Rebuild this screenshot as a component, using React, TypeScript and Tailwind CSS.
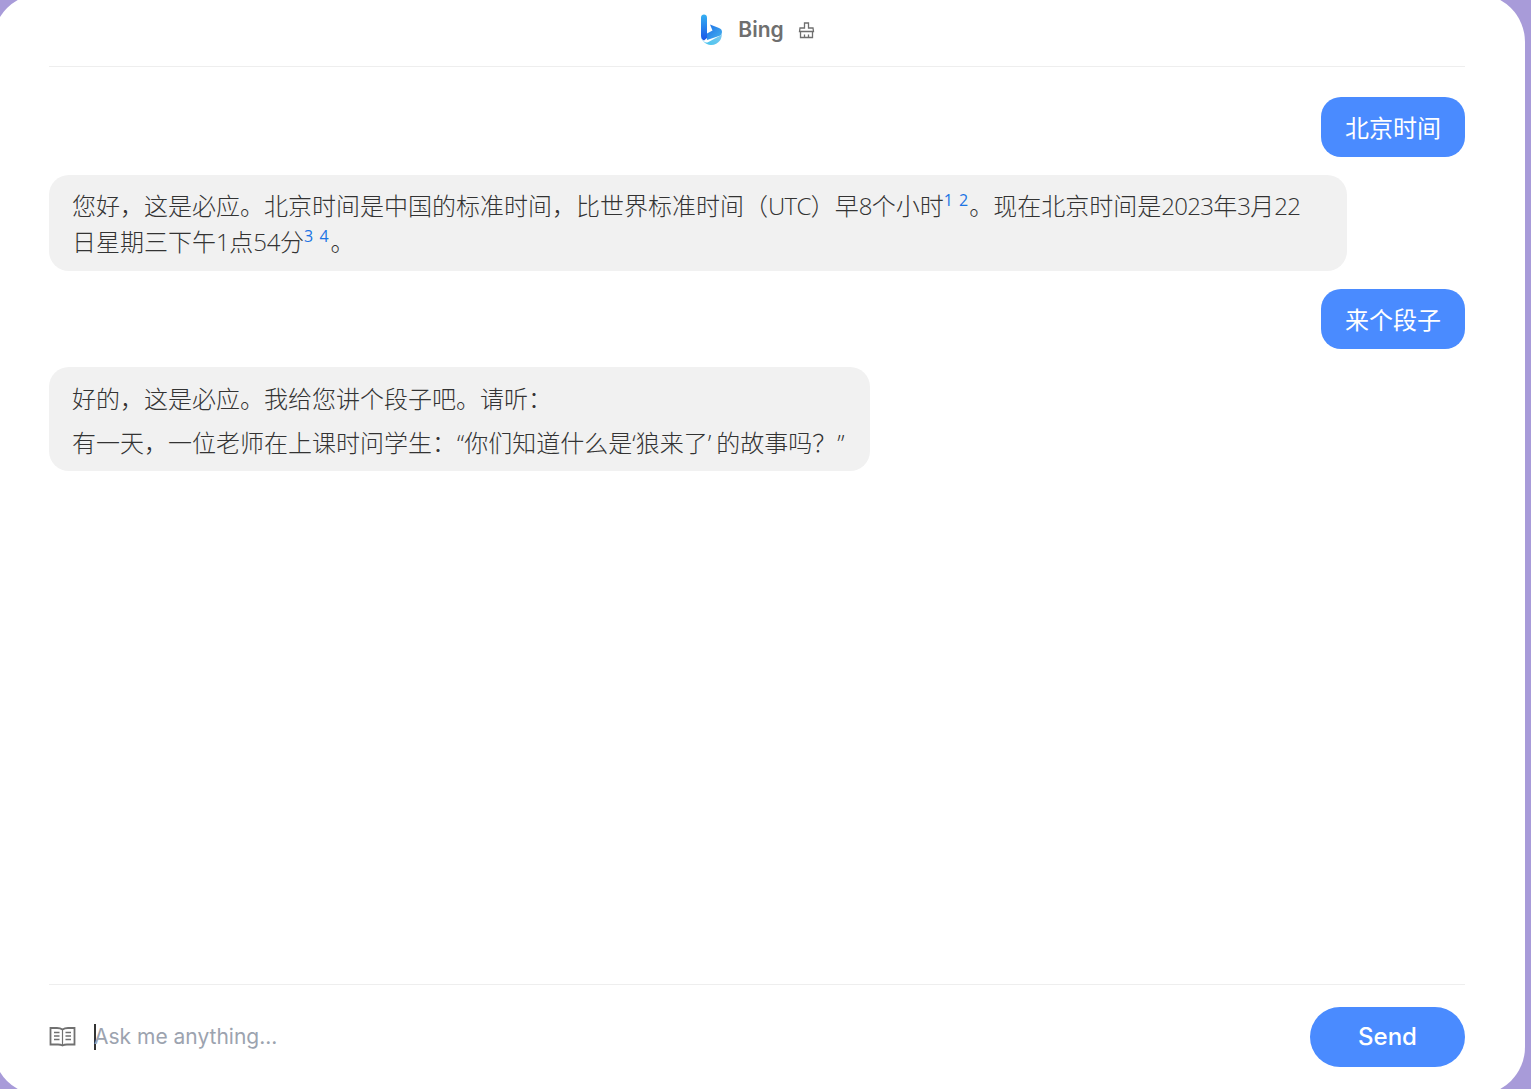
import { Fragment } from "react";

const cjk = "font-['Open_Sans','Noto_Sans_CJK_SC',sans-serif]";

function BingLogo() {
  return (
    <svg width="24" height="32" viewBox="0 0 24 32" className="shrink-0">
      <defs>
        <linearGradient id="bingA" x1="0" y1="0" x2="0" y2="1">
          <stop offset="0" stopColor="#35b0f2" />
          <stop offset="1" stopColor="#1a55e8" />
        </linearGradient>
        <linearGradient id="bingB" x1="0" y1="1" x2="1" y2="0">
          <stop offset="0" stopColor="#3fc4ee" />
          <stop offset="1" stopColor="#86c8f0" />
        </linearGradient>
        <linearGradient id="bingC" x1="0" y1="0" x2="1" y2="1">
          <stop offset="0" stopColor="#1d6fe8" />
          <stop offset="1" stopColor="#45b4ee" />
        </linearGradient>
      </defs>
      <path d="M2 3.500C2 1.500 3.300.5 5 .5s3 1.200 3 3V24l-3 2.500C3 25.500 2 24 2 22Z" fill="url(#bingA)" />
      <path d="M11 10.500 20 14c2 .8 3 2.200 3 4 0 1.500-.8 3-2.200 3.800L8 26v-6.500l5.500-3-2.500-6Z" fill="url(#bingC)" />
      <path d="M2 21.500c0 2.500 1 4.500 2.500 6 2 2.300 4.500 3.500 7.500 3.500 4 0 7-2 9-4.500 1.300-1.800 2-4.500 2-8.500 0 2-1 3.200-2.500 4L8.500 28.500C5.500 29 2.500 26 2 21.500Z" fill="url(#bingB)" />
    </svg>
  );
}

function BroomIcon() {
  return (
    <svg width="17" height="17" viewBox="0 0 17 17" fill="none" stroke="#6f6f6f" strokeWidth="1.300" className="shrink-0">
      <path d="M6.500 1h4v5h4.500l.5 3.500H1.500L2 6h4.500Z" />
      <path d="M2.500 9.500v6h12v-6" />
      <path d="M6.500 15.500v-3M10.500 15.500v-3" />
    </svg>
  );
}

function BookIcon() {
  return (
    <svg width="27" height="20" viewBox="0 0 27 20" fill="none" stroke="#707070" className="shrink-0">
      <path d="M13.500 2.500C12 1.500 10.500 1 8 1H1.500v16.500H9c2 0 3.400.4 4.500 1 1.100-.6 2.500-1 4.500-1h7.500V1H19c-2.500 0-4 .5-5.500 1.500Z" strokeWidth="1.800" />
      <path d="M13.500 2.500v16" strokeWidth="1.200" />
      <path d="M5 5.500h5.500M5 9h5.500M5 12.500h5.500M16.500 5.500H22M16.500 9H22M16.500 12.500H22" strokeWidth="1.600" />
    </svg>
  );
}

function Cite({ n }: { n: string }) {
  return <sup className="relative top-[-8px] align-[1px] text-[16px] leading-none font-normal text-[#1b74e4]">{n}</sup>;
}

// digits in the reference are a bit narrower than Open Sans
function Num({ children, tight }: { children: React.ReactNode; tight?: boolean }) {
  return <span className={tight ? "tracking-[-0.7px]" : "tracking-[-0.35px]"}>{children}</span>;
}

function Question({ text }: { text: string }) {
  return (
    <div className="flex justify-end">
      <div className={`h-[60px] rounded-[20px] bg-[#4a8bff] px-[24px] text-[24px] leading-[62px] text-white ${cjk}`}>
        {text}
      </div>
    </div>
  );
}

function Answer({ width, lines }: { width: string; lines: React.ReactNode[] }) {
  return (
    <div className={`${width} rounded-[20px] bg-[#f1f1f1] px-[23px] py-[13px] text-[24px] font-light text-[#333333] ${cjk}`}>
      {lines.map((line, i) => (
        <Fragment key={i}>{line}</Fragment>
      ))}
    </div>
  );
}

export default function App() {
  return (
    <div className="h-[1089px] w-[1531px] overflow-hidden bg-[#a89bd9]">
      <div className="-mt-[6px] -ml-[7px] flex h-[1101px] w-[1532px] flex-col rounded-[48px] bg-white pt-[6px] pr-[60px] pb-[6px] pl-[56px]">
        <header className="flex h-[67px] shrink-0 items-center justify-center border-b border-[#eeeeee] pb-[6px] pl-[1px]">
          <BingLogo />
          <span className="ml-[15px] font-['Inter',sans-serif] text-[21px] font-semibold text-[#6f6f6f]">Bing</span>
          <span className="mr-[1px] ml-[14px] flex">
            <BroomIcon />
          </span>
        </header>

        <main className="flex flex-1 flex-col gap-[18px] pt-[30px]">
          <Question text="北京时间" />
          <Answer
            width="w-[1298px]"
            lines={[
              <div key="a" className="h-[36px] leading-[36px] whitespace-nowrap">
                您好，这是必应。北京时间是中国的标准时间，比世界标准时间（<Num tight>UTC</Num>）早<Num tight>8</Num>个小时
                <Cite n="1" /> <Cite n="2" />
                <span className="ml-[1px]">。现在北京时间是</span><Num tight>2023</Num>年<Num tight>3</Num>月<Num tight>22</Num>
              </div>,
              <div key="b" className="h-[34px] leading-[36px] whitespace-nowrap">
                日星期三下午<Num>1</Num>点<Num>54</Num>分
                <Cite n="3" /> <Cite n="4" />
                <span className="ml-[2px]">。</span>
              </div>,
            ]}
          />
          <Question text="来个段子" />
          <Answer
            width="w-[821px]"
            lines={[
              <div key="a" className="mt-[1px] h-[36px] leading-[36px] whitespace-nowrap">
                好的，这是必应。我给您讲个段子吧。请听：
              </div>,
              <div key="b" className="mt-[8px] -mb-[1px] h-[34px] leading-[36px] whitespace-nowrap">
                有一天，一位老师在上课时问学生<span className="tracking-[1px]">：</span>“你们知道什么是‘狼来了<span className="tracking-[5px]">’</span>的故事吗<span className="tracking-[1px]">？</span>”
              </div>,
            ]}
          />
        </main>

        <footer className="flex h-[105px] shrink-0 items-start border-t border-[#eeeeee] pt-[22px]">
          <div className="flex h-[60px] w-full items-center">
            <BookIcon />
            <div className="ml-[18px] h-[26px] w-[2px] bg-[#333333]" />
            <div className="-ml-[2px] flex-1 font-['Inter',sans-serif] text-[21px] text-[#9ca3af]">Ask me anything...</div>
            <button
              type="button"
              className="h-[60px] w-[155px] rounded-full bg-[#4a8bff] font-['Inter',sans-serif] text-[24px] font-medium text-white"
            >
              Send
            </button>
          </div>
        </footer>
      </div>
    </div>
  );
}
